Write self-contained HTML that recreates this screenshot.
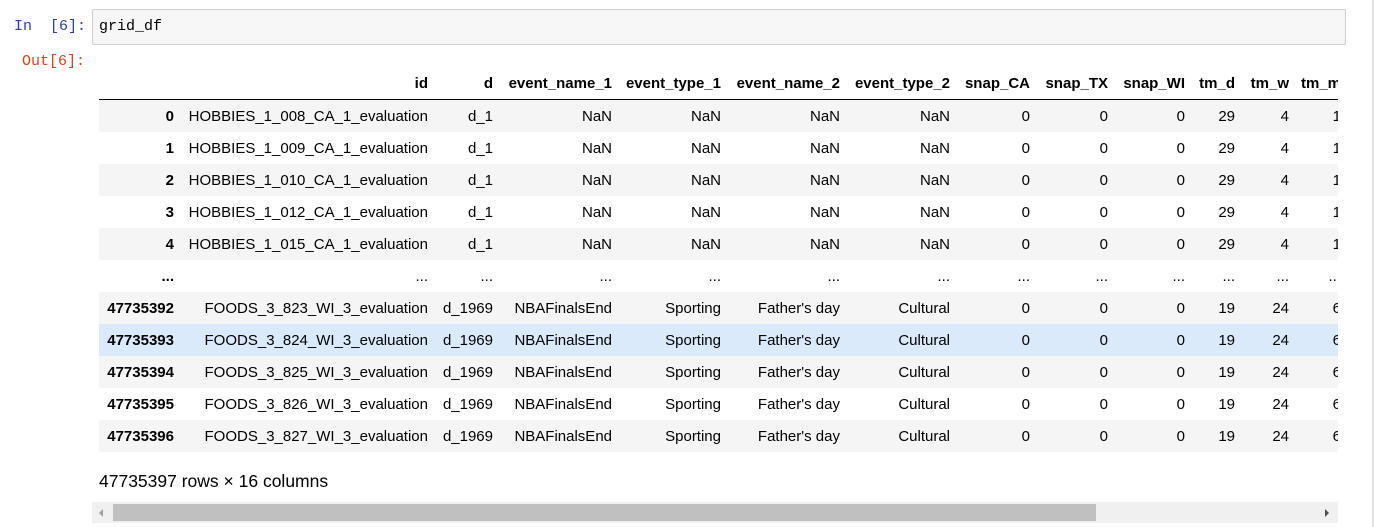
<!DOCTYPE html>
<html><head><meta charset="utf-8"><style>
body{margin:0;width:1374px;height:527px;background:#fff;position:relative;overflow:hidden;font-family:"Liberation Sans",Arial,sans-serif;}
.mono{font-family:"Liberation Mono",monospace;font-size:15px;position:absolute;}
#inbox{position:absolute;left:92px;top:9px;width:1252px;height:34px;background:#f7f7f7;border:1px solid #cfcfcf;border-radius:2px;}
#clip{position:absolute;left:99px;top:60px;width:1239px;height:400px;overflow:hidden;}
.row{position:absolute;left:0;width:1239px;height:32px;}
.c{position:absolute;top:1px;line-height:32px;font-size:15px;color:#000;text-align:right;white-space:nowrap;}
.b{font-weight:bold;}
#vline{position:absolute;left:1372px;top:0;width:2px;height:527px;background:#e0e0e0;}
</style></head><body>
<div class="mono" style="left:14px;top:18px;color:#303f9f">In&nbsp;&nbsp;[6]:</div>
<div id="inbox"></div>
<div class="mono" style="left:99px;top:18px;color:#000">grid_df</div>
<div class="mono" style="left:22px;top:53px;color:#d84315">Out[6]:</div>
<div id="clip"></div>
<div style="position:absolute;left:99px;top:471px;font-size:17.5px;line-height:20px;">47735397 rows × 16 columns</div>
<div style="position:absolute;left:92px;top:502px;width:1246px;height:21px;background:#f0f0f0;"></div>
<div style="position:absolute;left:113px;top:504px;width:983px;height:17px;background:#c0c0c0;"></div>
<div style="position:absolute;left:99px;top:509px;width:0;height:0;border-top:4px solid transparent;border-bottom:4px solid transparent;border-right:4px solid #a0a0a0;"></div>
<div style="position:absolute;left:1325px;top:509px;width:0;height:0;border-top:4px solid transparent;border-bottom:4px solid transparent;border-left:4px solid #505050;"></div>
<div id="vline"></div>
<script>
var R=[174,428,493,612,721,840,950,1030,1108,1185,1235,1289,1341];
var clip=document.getElementById('clip');
function row(top,vals,bg,bold0,allbold){
 var r=document.createElement('div');r.className='row';r.style.top=top+'px';if(bg)r.style.background=bg;
 var h='';
 for(var i=0;i<vals.length;i++){
  var cls='c'+((allbold||(i==0&&bold0))?' b':'');
  h+='<div class="'+cls+'" style="right:'+(1239-(R[i]-99))+'px">'+vals[i]+'</div>';
 }
 r.innerHTML=h;clip.appendChild(r);
}
row(7,['','id','d','event_name_1','event_type_1','event_name_2','event_type_2','snap_CA','snap_TX','snap_WI','tm_d','tm_w','tm_m'],null,false,true);
var line=document.createElement('div');line.style.cssText='position:absolute;left:0;top:39px;width:1239px;height:1px;background:#000';clip.appendChild(line);
var ids=['008','009','010','012','015'];
for(var k=0;k<5;k++){
 row(40+32*k,[k,'HOBBIES_1_'+ids[k]+'_CA_1_evaluation','d_1','NaN','NaN','NaN','NaN','0','0','0','29','4','1'],k%2==0?'#f5f5f5':null,true);
}
row(200,['...','...','...','...','...','...','...','...','...','...','...','...','...'],null,true);
var bg=['#f5f5f5','#dbeafb','#f5f5f5',null,'#f5f5f5'];
for(var k=0;k<5;k++){
 row(232+32*k,[47735392+k,'FOODS_3_'+(823+k)+'_WI_3_evaluation','d_1969','NBAFinalsEnd','Sporting','Father\'s day','Cultural','0','0','0','19','24','6'],bg[k],true);
}
</script>
</body></html>
